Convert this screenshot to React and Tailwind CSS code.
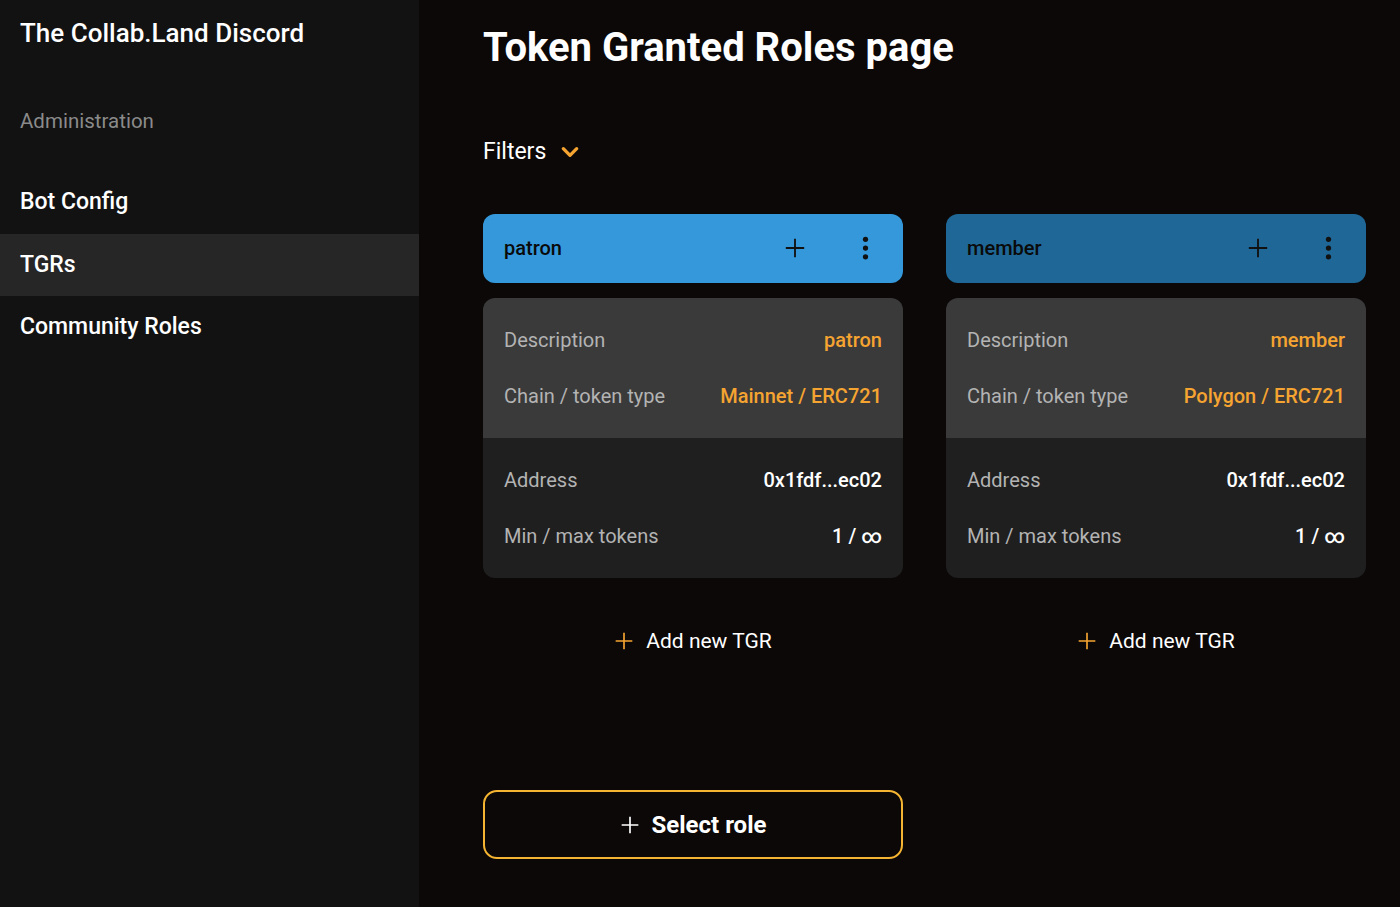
import React from 'react';

const font = { fontFamily: 'Roboto, "Noto Sans", sans-serif' };

function PlusIcon({ className }) {
  return (
    <svg viewBox="0 0 24 24" className={className} fill="none" stroke="currentColor" strokeWidth="2">
      <path d="M12 2v20M2 12h20" />
    </svg>
  );
}

function DotsIcon({ className }) {
  return (
    <svg viewBox="0 0 8 28" className={className} fill="currentColor">
      <circle cx="4" cy="4" r="3" />
      <circle cx="4" cy="14" r="3" />
      <circle cx="4" cy="24" r="3" />
    </svg>
  );
}

function Row({ label, value, accent }) {
  return (
    <div className="flex items-center justify-between h-14">
      <span className="text-[#b3b3b3]">{label}</span>
      <span className={accent ? 'text-[#f5a431] font-medium' : 'text-white font-medium'}>{value}</span>
    </div>
  );
}

function RoleColumn({ name, chain, headerClass }) {
  return (
    <div className="flex flex-col">
      <div className={`flex items-center h-[69px] pl-[21px] pr-[34px] rounded-xl ${headerClass}`}>
        <span className="flex-1 text-[20px] font-medium text-[#0a0a0a]">{name}</span>
        <PlusIcon className="w-[22px] h-[22px] text-[#111] mr-[56px]" />
        <DotsIcon className="w-[7px] h-[26px] text-[#111]" />
      </div>
      <div className="mt-[15px] rounded-xl overflow-hidden text-[20px]">
        <div className="bg-[#3a3a3a] px-[21px] py-[14px]">
          <Row label="Description" value={name} accent />
          <Row label="Chain / token type" value={chain} accent />
        </div>
        <div className="bg-[#1f1f1f] px-[21px] py-[14px]">
          <Row label="Address" value="0x1fdf...ec02" />
          <Row label="Min / max tokens" value="1 / ∞" />
        </div>
      </div>
      <button className="mt-[48px] flex items-center justify-center gap-3 text-white text-[21px]">
        <PlusIcon className="w-[20px] h-[20px] text-[#f5a431]" />
        Add new TGR
      </button>
    </div>
  );
}

export default function App() {
  return (
    <div className="flex min-h-screen h-[907px] bg-[#0c0807]" style={font}>
      <aside className="w-[419px] shrink-0 bg-[#121212] text-white">
        <h1 className="pl-5 pt-[14px] text-[26px] font-medium leading-[38px]">The Collab.Land Discord</h1>
        <p className="pl-5 mt-[54px] text-[20.5px] text-[#8a8a8a]">Administration</p>
        <nav className="mt-[34px] text-[23px] font-medium">
          <div className="h-[63px] flex items-center pl-5">Bot Config</div>
          <div className="h-[62px] flex items-center pl-5 bg-[#262626]">TGRs</div>
          <div className="h-[63px] flex items-center pl-5">Community Roles</div>
        </nav>
      </aside>
      <main className="flex-1 pl-[64px] pr-[34px] text-white">
        <h2 className="mt-[22px] text-[40px] font-bold leading-[52px]">Token Granted Roles page</h2>
        <div className="mt-[61px] flex items-center gap-[14px] text-[23px]">
          Filters
          <svg viewBox="0 0 24 24" className="w-[20px] h-[20px] text-[#f5a431]" fill="none" stroke="currentColor" strokeWidth="4" strokeLinecap="round" strokeLinejoin="round">
            <path d="M4 8l8 8 8-8" />
          </svg>
        </div>
        <div className="mt-[44px] grid grid-cols-2 gap-[43px]">
          <RoleColumn name="patron" chain="Mainnet / ERC721" headerClass="bg-[#3498db]" />
          <RoleColumn name="member" chain="Polygon / ERC721" headerClass="bg-[#1f6796]" />
        </div>
        <div className="mt-[133px] w-[420px] h-[69px] rounded-[14px] border-2 border-[#f5b431] flex items-center justify-center gap-3">
          <PlusIcon className="w-[20px] h-[20px] text-white" />
          <span className="text-[24px] font-bold">Select role</span>
        </div>
      </main>
    </div>
  );
}
